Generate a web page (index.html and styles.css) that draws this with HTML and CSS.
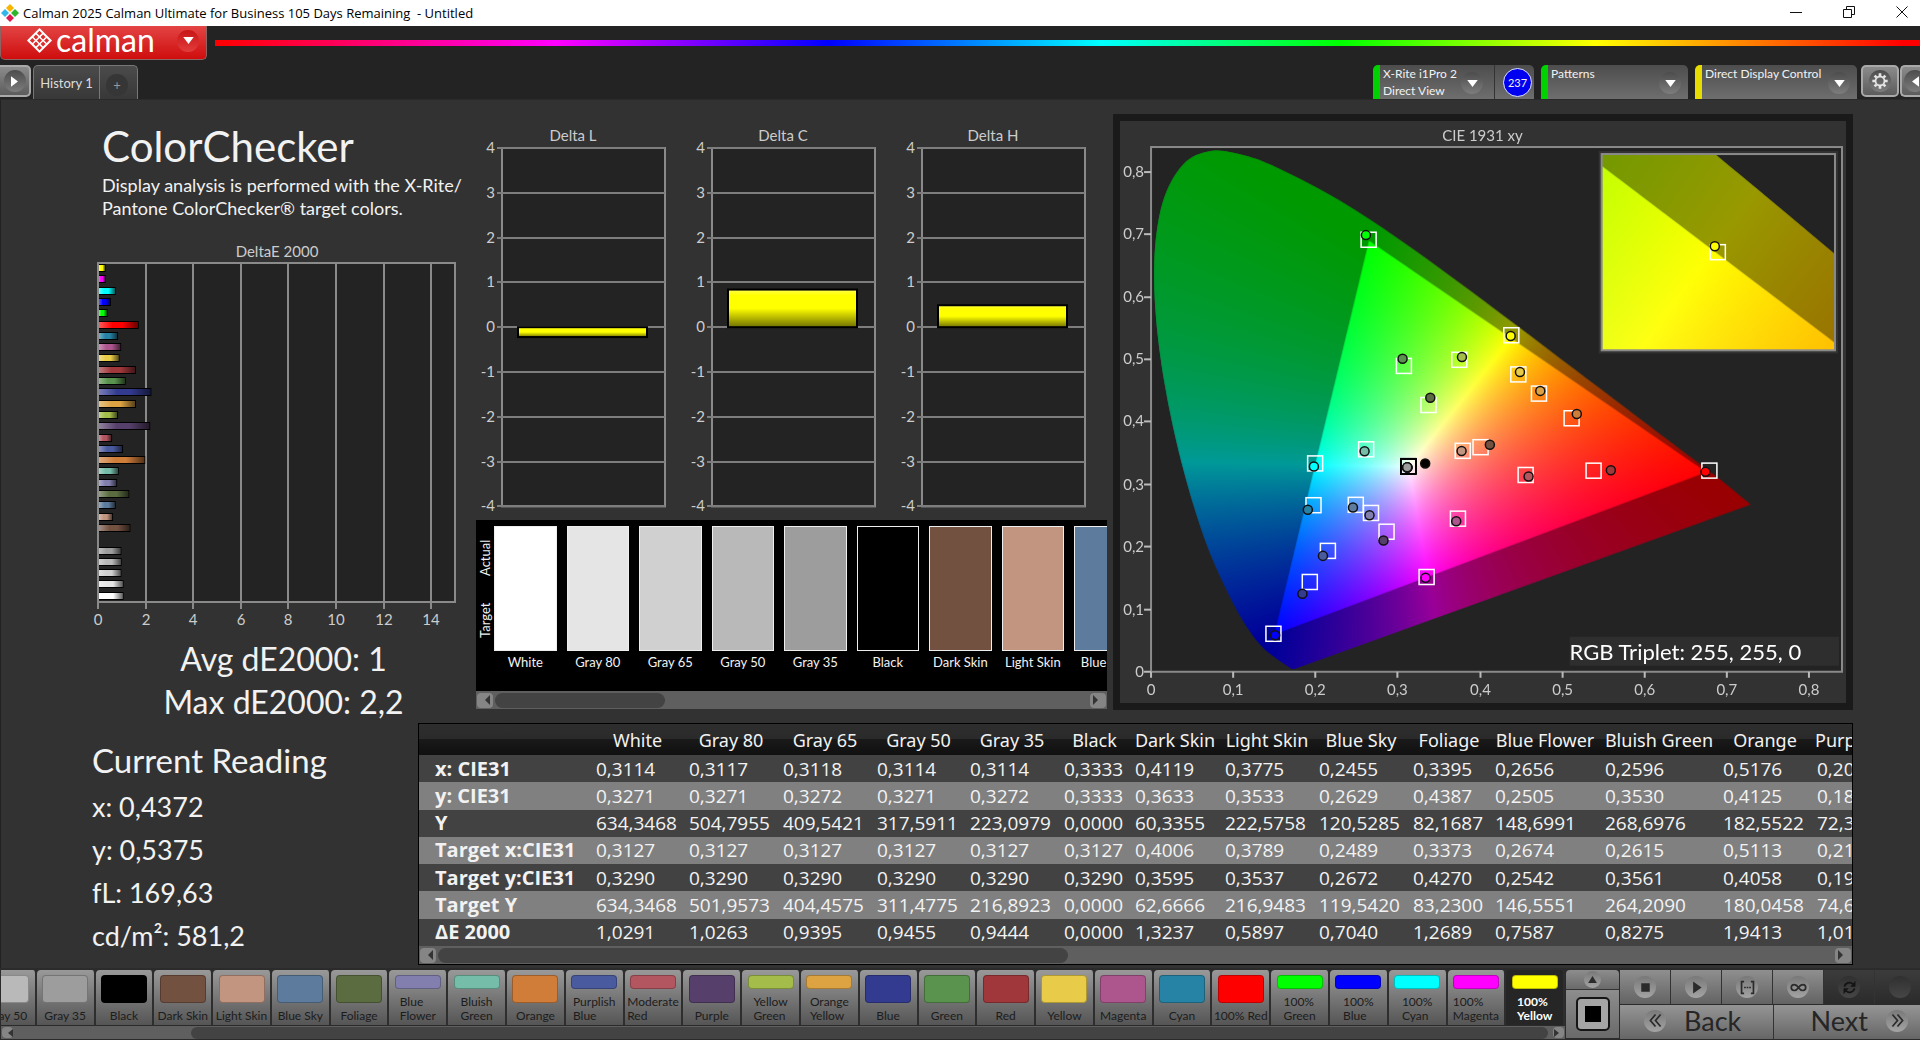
FILE: index.html
```html
<!DOCTYPE html>
<html lang="en">
<head>
  <meta charset="UTF-8" />
  <meta name="viewport" content="width=device-width, initial-scale=1.0"/>
  <title>Calman 2025</title>
  <link rel="stylesheet" href="styles.css">
</head>
<body>
<div class="titlebar">
  <svg class="app-icon" viewBox="0 0 18 18">
    <path d="M9 0l4 4-4 4-4-4z" fill="#f7b500"/>
    <path d="M4 5l4 4-4 4-4-4z" fill="#35b5ea"/>
    <path d="M14 5l4 4-4 4-4-4z" fill="#2fb52c"/>
    <path d="M9 10l4 4-4 4-4-4z" fill="#e0194f"/>
  </svg>
  <span class="titlebar-text">Calman 2025 Calman Ultimate for Business 105 Days Remaining&nbsp; - Untitled</span>
  <div class="window-buttons">
    <button aria-label="Minimize"><svg viewBox="0 0 12 12"><path d="M0 6.5h12"/></svg></button>
    <button aria-label="Restore"><svg viewBox="0 0 12 12"><path d="M.5 3.5h8v8h-8zM3.5 3V.5h8v8H9"/></svg></button>
    <button aria-label="Close"><svg viewBox="0 0 12 12"><path d="M.5 .5l11 11M11.5 .5l-11 11"/></svg></button>
  </div>
</div>

<header class="brandbar">
  <button class="brand">
    <svg class="brand-mark" viewBox="0 0 28 28">
      <path d="M14 1l13 13-13 13L1 14z" fill="#fff"/>
      <g fill="#dc2c2c">
        <path d="M14 4l2.600 2.600L14 9.200l-2.600-2.600z"/>
        <path d="M10.300 7.700l2.600 2.600-2.600 2.600-2.600-2.600z"/>
        <path d="M17.700 7.700l2.600 2.600-2.600 2.600-2.600-2.600z"/>
        <path d="M6.600 11.400L9.200 14l-2.600 2.600L4 14z"/>
        <path d="M14 11.400l2.600 2.600-2.600 2.600-2.600-2.600z"/>
        <path d="M21.400 11.400L24 14l-2.600 2.600-2.600-2.600z"/>
        <path d="M10.300 15.100l2.600 2.600-2.600 2.600-2.600-2.600z"/>
        <path d="M17.700 15.100l2.600 2.600-2.600 2.600-2.600-2.600z"/>
        <path d="M14 18.800l2.600 2.600L14 24l-2.600-2.600z"/>
      </g>
    </svg>
    <span class="brand-name">calman</span>
    <span class="knob knob-red"><svg viewBox="0 0 12 8"><path d="M0 0h12L6 8z"/></svg></span>
  </button>
  <div class="rainbow"></div>
</header>

<nav class="tabbar">
  <button class="square-btn side-left" aria-label="Expand"><span class="knob"><svg viewBox="0 0 8 12"><path d="M0 0v12l8-6z"/></svg></span></button>
  <div class="history">
    <button class="history-tab">History 1</button>
    <button class="history-add" aria-label="Add tab"><span class="knob">+</span></button>
  </div>
  <div class="instruments">
    <div class="instrument green meter">
      <button class="instrument-main"><span>X-Rite i1Pro 2<br>Direct View</span><span class="knob"><svg viewBox="0 0 12 8"><path d="M0 0h12L6 8z"/></svg></span></button>
      <span class="counter">237</span>
    </div>
    <div class="instrument green source">
      <button class="instrument-main"><span>Patterns</span><span class="knob"><svg viewBox="0 0 12 8"><path d="M0 0h12L6 8z"/></svg></span></button>
    </div>
    <div class="instrument yellow display">
      <button class="instrument-main"><span>Direct Display Control</span><span class="knob"><svg viewBox="0 0 12 8"><path d="M0 0h12L6 8z"/></svg></span></button>
    </div>
    <button class="square-btn gear" aria-label="Settings"><span class="knob"><svg viewBox="0 0 20 20">
      <circle cx="10" cy="10" r="5" fill="none" stroke="#e4e4e4" stroke-width="2"/>
      <path fill="none" stroke="#e4e4e4" stroke-width="3" d="M10 1.500v3M10 15.500v3M1.500 10h3M15.500 10h3M4 4l2 2M14 14l2 2M16 4l-2 2M6 14l-2 2"/>
    </svg></span></button>
    <button class="square-btn side-right" aria-label="Collapse"><span class="knob"><svg viewBox="0 0 8 12"><path d="M8 0v12L0 6z"/></svg></span></button>
  </div>
</nav>

<main>
  <div class="top-row">
    <section class="summary">
      <h1>ColorChecker</h1>
      <p class="intro">Display analysis is performed with the X-Rite/<br>Pantone ColorChecker® target colors.</p>
      <svg id="deltaE" class="chart" viewBox="0 0 475 395"></svg>
      <div class="stats">
        <p>Avg dE2000: 1</p>
        <p>Max dE2000: 2,2</p>
      </div>
    </section>

    <section class="middle">
      <svg id="deltaLCH" class="chart" viewBox="0 0 631 397"></svg>
      <div class="swatches">
        <div class="swatch-view">
          <div class="swatch-side"><span>Target</span><span>Actual</span></div>
          <div id="swatchList" class="swatch-list"></div>
        </div>
        <div class="scrollbar"><button class="left" aria-label="Scroll left"></button><span class="thumb"></span><button class="right" aria-label="Scroll right"></button></div>
      </div>
    </section>

    <section class="cie">
      <canvas id="cieColors" width="725" height="581"></canvas>
      <svg id="ciePlot" viewBox="0 0 725 581"></svg>
    </section>
  </div>

  <div class="bottom-row">
    <section class="reading">
      <h2>Current Reading</h2>
      <p>x: 0,4372</p>
      <p>y: 0,5375</p>
      <p>fL: 169,63</p>
      <p>cd/m²: 581,2</p>
    </section>
    <section class="results">
      <div class="table-view">
        <table id="results"></table>
      </div>
      <div class="scrollbar wide"><button class="left" aria-label="Scroll left"></button><span class="thumb"></span><button class="right" aria-label="Scroll right"></button></div>
    </section>
  </div>
</main>

<footer>
  <div class="strip">
    <div class="strip-view"><div id="patches" class="patches"></div></div>
    <div class="scrollbar strip-scroll"><button class="left" aria-label="Scroll left"></button><span class="thumb"></span><button class="right" aria-label="Scroll right"></button></div>
  </div>
  <div class="level">
    <button class="level-up" aria-label="Up"><span class="knob"><svg viewBox="0 0 10 8"><path d="M5 0l5 8H0z"/></svg></span></button>
    <button class="level-stop" aria-label="Pattern window"><span></span></button>
  </div>
  <div class="controls">
    <div class="transport">
      <button aria-label="Stop"><span class="knob"><svg viewBox="0 0 20 20"><path d="M5 5h10v10H5z"/></svg></span></button>
      <button aria-label="Play"><span class="knob"><svg viewBox="0 0 20 20"><path d="M6 3l10 7-10 7z"/></svg></span></button>
      <button aria-label="Read series"><span class="knob"><svg viewBox="0 0 20 20"><path class="line" d="M6 3H3v14h3M14 3h3v14h-3"/><path d="M6 9h2v2H6zM9 9h2v2H9zM12 9h2v2h-2z"/></svg></span></button>
      <button aria-label="Continuous"><span class="knob"><svg viewBox="0 0 20 20"><path class="line" d="M10 10C8 7 6.500 6.500 5 6.500a3.500 3.500 0 0 0 0 7c1.500 0 3-.5 5-3.500s3.500-3.500 5-3.500a3.500 3.500 0 0 1 0 7c-1.500 0-3-.5-5-3.500z"/></svg></span></button>
      <button class="off" aria-label="Refresh"><span class="knob"><svg viewBox="0 0 20 20"><path class="line" d="M4 9a6 6 0 0 1 10-3M16 11a6 6 0 0 1-10 3"/><path d="M17 2v7h-6zM3 18v-7h6z"/></svg></span></button>
      <button class="off" aria-label="Empty"><span class="knob"></span></button>
    </div>
    <div class="steps">
      <button class="back"><span class="knob"><svg viewBox="0 0 20 20"><path class="line" d="M10 3l-6 7 6 7M16 3l-6 7 6 7"/></svg></span>Back</button>
      <button class="next">Next<span class="knob"><svg viewBox="0 0 20 20"><path class="line" d="M4 3l6 7-6 7M10 3l6 7-6 7"/></svg></span></button>
    </div>
  </div>
</footer>

<script src="script.js"></script>
</body>
</html>
```

FILE: styles.css
```css
* {
  margin: 0;
  padding: 0;
  box-sizing: border-box;
}

body {
  height: 100vh;
  display: flex;
  flex-direction: column;
  overflow: hidden;
  background: #323232;
  color: #f2f2f2;
  font-family: Lato, "Liberation Sans", sans-serif;
}

button {
  border: none;
  background: none;
  color: inherit;
  font-family: inherit;
  cursor: pointer;
}

h1, h2 {
  font-weight: normal;
}

/* window title */
.titlebar {
  display: flex;
  align-items: center;
  height: 26px;
  flex: none;
  padding-left: 1px;
  background: #fff;
  color: #000;
  font-family: "Open Sans", sans-serif;
  font-size: 13px;
}

.app-icon {
  width: 18px;
  height: 18px;
  margin-right: 4px;
}

.window-buttons {
  display: flex;
  margin-left: auto;
}

.window-buttons button {
  width: 53px;
  height: 26px;
}

.window-buttons button:last-child {
  width: 45px;
  padding-left: 8px;
}

.window-buttons svg {
  width: 12px;
  height: 12px;
  fill: none;
  stroke: #111;
}

/* logo and rainbow line */
.brandbar {
  display: flex;
  flex: none;
  height: 39px;
  background: #232323;
}

.brand {
  display: flex;
  align-items: center;
  width: 207px;
  height: 34px;
  padding: 0 7px 4px 25px;
  border: 1px solid #8d6464;
  border-top: none;
  border-radius: 0 0 5px 5px;
  background: linear-gradient(#e34444, #cf0d0d);
  color: #fff;
}

.brand-mark {
  width: 27px;
  height: 27px;
}

.brand-name {
  flex: 1;
  margin-left: 3px;
  padding-bottom: 2px;
  font-size: 32px;
  line-height: 28px;
  text-align: left;
}

.knob {
  display: flex;
  align-items: center;
  justify-content: center;
  width: 22px;
  height: 22px;
  flex: none;
  border-radius: 50%;
  background: linear-gradient(#4c4c4c, #7d7d7d);
}

.knob svg {
  width: 11px;
  height: 7px;
  fill: #fff;
}

.knob-red {
  background: linear-gradient(#c81414, #e23c3c);
}

.rainbow {
  flex: 1;
  height: 6px;
  margin: 14px 0 0 8px;
  background: linear-gradient(90deg, #f00, #f0f 20%, #00f 36%, #0ff 52%, #0f0 66%, #ff0 81%, #f00 99%);
}

/* tabs under the logo */
.tabbar {
  display: flex;
  flex: none;
  height: 34px;
  background: #232323;
}

.square-btn {
  display: flex;
  align-items: center;
  justify-content: center;
  width: 38px;
  height: 32px;
  border: 2px solid #a9a9a9;
  border-radius: 5px;
  background: linear-gradient(#8b8b8b, #5c5c5c);
}

.square-btn .knob svg {
  width: 7px;
  height: 11px;
}

.side-left {
  width: 31px;
  border-left: none;
  border-radius: 0 5px 5px 0;
}

.history {
  display: flex;
  margin-left: 2px;
  border: 1px solid #777;
  border-bottom: none;
  border-radius: 5px 5px 0 0;
  background: linear-gradient(#4b4b4b, #383838);
}

.history-tab {
  width: 66px;
  border-right: 1px solid #777;
  color: #ddd;
  font-size: 13px;
}

.history-add {
  width: 37px;
  padding: 4px 6px 0;
  color: #999;
  font-size: 13px;
}

.history-add .knob {
  background: #363636;
}

.instruments {
  display: flex;
  margin-left: auto;
}

.instrument {
  display: flex;
  margin-right: 7px;
  border-left: 7px solid #00d200;
  border-radius: 5px 5px 0 0;
  background: linear-gradient(#4d4d4d, #6e6e6e);
}

.instrument.yellow {
  border-color: #e6dc00;
  margin-right: 4px;
}

.meter {
  width: 161px;
}

.source {
  width: 147px;
}

.display {
  width: 162px;
}

.instrument-main {
  display: flex;
  flex: 1;
  justify-content: space-between;
  align-items: flex-start;
  padding: 0 7px 0 3px;
  font-size: 12px;
  line-height: 17px;
  text-align: left;
  white-space: nowrap;
}

.instrument-main .knob {
  margin-top: 7px;
  margin-left: -8px;
}

.meter .instrument-main {
  padding-right: 11px;
  border-right: 1px solid #333;
}

.counter {
  width: 29px;
  height: 29px;
  margin: 3px 2px 0 8px;
  border: 1px solid #dfe3ff;
  border-radius: 50%;
  background: #0000f0;
  font-size: 11px;
  line-height: 27px;
  text-align: center;
}

.gear .knob svg {
  width: 18px;
  height: 18px;
}

.side-right {
  width: 20px;
  margin-left: 1px;
  border-right: none;
  border-radius: 5px 0 0 5px;
  justify-content: flex-start;
  padding-left: 2px;
  overflow: hidden;
}

/* work area */
main {
  flex: 1;
  display: flex;
  flex-direction: column;
  padding-right: 67px;
  border-left: 1px solid #222;
  border-top: 1px solid #2a2a2a;
}

.top-row {
  display: grid;
  grid-template-columns: minmax(0, 475fr) minmax(0, 631fr) minmax(0, 746fr);
  align-items: start;
}

.chart {
  display: block;
  width: 100%;
}

.chart text, .cie text {
  fill: #ccc;
  font-size: 15px;
}

.summary {
  padding-top: 21px;
}

.summary h1 {
  padding-left: 101px;
  font-size: 42px;
  line-height: 50px;
}

.intro {
  margin: 3px 0 19px;
  padding-left: 101px;
  font-size: 18px;
  line-height: 23px;
  white-space: nowrap;
}

.stats {
  padding: 3px 0 0 90px;
  font-size: 32px;
  line-height: 43px;
  text-align: center;
}

.middle {
  padding-top: 23px;
}

.swatches {
  background: #000;
}

.swatch-view {
  display: flex;
  height: 171px;
  padding-top: 6px;
  overflow: hidden;
}

.swatch-side {
  display: flex;
  justify-content: space-around;
  width: 18px;
  height: 125px;
  writing-mode: vertical-rl;
  transform: rotate(180deg);
  font-size: 13px;
  line-height: 18px;
}

.swatch-list {
  flex: 1;
  display: grid;
  grid-auto-flow: column;
  grid-auto-columns: 10.2%;
  column-gap: 10px;
}

.swatch {
  font-size: 13px;
  line-height: 23px;
  text-align: center;
  white-space: nowrap;
}

.swatch-color {
  height: 125px;
  border: 1px solid #eee;
}

/* scrollbars */
.scrollbar {
  display: flex;
  align-items: center;
  height: 18px;
  padding: 0 1px;
  background: #5f5f5f;
}

.scrollbar button {
  width: 16px;
  height: 15px;
  border-radius: 4px;
  background: #858585;
}

.scrollbar button::before {
  content: "";
  display: block;
  width: 5px;
  margin: auto;
  border: 5px solid transparent;
  border-right-color: #333;
  border-left-width: 0;
}

.scrollbar .right {
  margin-left: auto;
}

.scrollbar .right::before {
  border-left: 5px solid #333;
  border-right-width: 0;
}

.thumb {
  width: 27%;
  height: 15px;
  margin-left: 2px;
  border-radius: 8px;
  background: #434343;
}

.wide .thumb {
  width: 44%;
}

/* CIE chart, colours below and markers on top */
.cie {
  display: grid;
  margin: 14px 0 0 6px;
  border: 7px solid #1a1a1a;
  background: #323232;
}

.cie canvas, .cie svg {
  grid-area: 1 / 1;
  width: 100%;
  display: block;
}

.cie .triplet {
  fill: #fff;
  font-size: 22px;
}

.bottom-row {
  display: flex;
}

.reading {
  width: 417px;
  flex: none;
  padding: 14px 0 0 91px;
}

.reading h2 {
  margin-bottom: 2px;
  font-size: 33px;
  line-height: 46px;
}

.reading p {
  font-size: 27px;
  line-height: 43px;
}

.results {
  flex: 1;
  min-width: 0;
  border: 1px solid #000;
}

.table-view {
  overflow: hidden;
}

table {
  width: 1920px;
  height: 222px;
  table-layout: fixed;
  border-collapse: collapse;
  font-family: "Open Sans", sans-serif;
  font-size: 19px;
  line-height: 24px;
}

.col-label {
  width: 172px;
}

.col-s {
  width: 71px;
}

.col-w {
  width: 93px;
}

.col-m {
  width: 94px;
}

.col-f {
  width: 82px;
}

.col-d {
  width: 90px;
}

.col-l {
  width: 110px;
}

.col-xl {
  width: 118px;
}

thead {
  background: linear-gradient(#2e2e2e, #2a2a2a 49%, #191919 50%, #101010);
}

thead th {
  height: 31px;
  font-size: 18px;
  font-weight: normal;
  font-family: "Noto Sans", sans-serif;
  white-space: nowrap;
}

tbody tr {
  background: #424242;
}

tbody tr:nth-child(even) {
  background: #808080;
}

tbody th {
  padding-left: 16px;
  font-size: 20px;
  text-align: left;
}

tbody td {
  padding-left: 5px;
}

/* bottom strip */
footer {
  display: flex;
  flex: none;
  height: 72px;
  padding-top: 2px;
  background: #2b2b2b;
}

.strip {
  flex: 1;
  min-width: 0;
  padding-left: 1px;
}

.strip-view {
  height: 56px;
  overflow: hidden;
}

.patches {
  display: flex;
  height: 55px;
  margin-left: -23px;
}

.patch {
  flex: 1 1 0;
  min-width: 0;
  display: flex;
  flex-direction: column;
  align-items: center;
  padding: 5px 0 2px;
  border-right: 2px solid #2e2e2e;
  border-radius: 4px 4px 0 0;
  background: linear-gradient(#999, #555);
  color: #1c1c1c;
  font-size: 12px;
  line-height: 14px;
  white-space: nowrap;
}

.patch-color {
  flex: 1;
  width: 46px;
  margin-bottom: 6px;
  border: 1px solid rgba(0, 0, 0, 0.25);
  border-radius: 4px;
}

.patch span:last-child {
  text-align: left;
}

.patch.selected {
  background: #262626;
  color: #fff;
  font-weight: bold;
}

.strip-scroll {
  height: 13px;
}

.strip-scroll button {
  width: 11px;
  height: 11px;
}

.strip-scroll button::before {
  border-top-width: 4px;
  border-bottom-width: 4px;
}

.strip-scroll .thumb {
  flex: 1;
  height: 12px;
  margin-left: 178px;
  margin-right: 5px;
}

.level {
  display: flex;
  flex-direction: column;
  width: 55px;
  padding: 0 1px;
}

.level-up, .level-stop {
  display: flex;
  align-items: center;
  justify-content: center;
  background: linear-gradient(#8d8d8d, #6a6a6a);
}

.level-up {
  height: 20px;
  border-radius: 4px 4px 0 0;
  border-bottom: 1px solid #333;
}

.level-up .knob, .transport .knob, .steps .knob {
  background: linear-gradient(#787878, #a4a4a4);
}

.level-up .knob {
  width: 17px;
  height: 17px;
}

.level-up .knob svg, .transport svg, .steps svg {
  fill: #2b2b2b;
}

.level-stop {
  flex: 1;
  margin-bottom: 2px;
}

.level-stop span {
  width: 34px;
  height: 34px;
  border: 2px solid #151515;
  border-radius: 5px;
  background: linear-gradient(#000, #000) center / 16px 16px no-repeat, #a5a5a5;
}

.controls {
  width: 300px;
  overflow: hidden;
}

.transport {
  display: flex;
  height: 34px;
}

.transport button {
  display: flex;
  align-items: center;
  justify-content: center;
  flex: 0 0 51px;
  border-right: 1px solid #333;
  background: linear-gradient(#8f8f8f, #636363);
}

.transport .off {
  background: linear-gradient(#3c3c3c, #2b2b2b);
}

.transport .off .knob {
  background: linear-gradient(#303030, #464646);
}

.transport .knob svg, .steps .knob svg {
  width: 17px;
  height: 17px;
}

.knob .line {
  fill: none;
  stroke: #2b2b2b;
  stroke-width: 2;
}

.transport .off svg {
  fill: #141414;
}

.transport .off .line {
  stroke: #141414;
}

.steps {
  display: flex;
  height: 35px;
  padding-top: 1px;
}

.steps button {
  display: flex;
  align-items: center;
  padding-bottom: 3px;
  background: linear-gradient(#959595, #666);
  color: #262626;
  font-size: 27px;
}

.steps .back {
  flex: 0 0 154px;
  gap: 18px;
  padding-left: 24px;
  border-right: 1px solid #333;
}

.steps .next {
  flex: 1;
  gap: 18px;
  justify-content: flex-end;
  padding-right: 12px;
}
```

FILE: script.js
```js
// patches in measuring order: name, colour, deltaE, target x/y, actual x/y
const samples = [
  { name: "White", color: "#ffffff", de: 1.03, t: [0.3127, 0.3290], a: [0.3114, 0.3271] },
  { name: "Gray 80", color: "#e5e5e5", de: 1.03, t: [0.3127, 0.3290], a: [0.3117, 0.3271] },
  { name: "Gray 65", color: "#d0d0d0", de: 0.94, t: [0.3127, 0.3290], a: [0.3118, 0.3272] },
  { name: "Gray 50", color: "#b9b9b9", de: 0.95, t: [0.3127, 0.3290], a: [0.3114, 0.3271] },
  { name: "Gray 35", color: "#9d9d9d", de: 0.94, t: [0.3127, 0.3290], a: [0.3114, 0.3272] },
  { name: "Black", color: "#000000", de: 0, t: [0.3127, 0.3290], a: [0.3333, 0.3333] },
  { name: "Dark Skin", color: "#735141", de: 1.32, t: [0.4006, 0.3595], a: [0.4119, 0.3633] },
  { name: "Light Skin", color: "#c29580", de: 0.59, t: [0.3789, 0.3537], a: [0.3775, 0.3533] },
  { name: "Blue Sky", color: "#5d7b9d", de: 0.70, t: [0.2489, 0.2672], a: [0.2455, 0.2629] },
  { name: "Foliage", color: "#5b6c41", de: 1.27, t: [0.3373, 0.4270], a: [0.3395, 0.4387] },
  { name: "Blue Flower", color: "#827fae", de: 0.76, t: [0.2674, 0.2542], a: [0.2656, 0.2505], two: true },
  { name: "Bluish Green", color: "#76bda9", de: 0.83, t: [0.2615, 0.3561], a: [0.2596, 0.3530], two: true },
  { name: "Orange", color: "#d07d3a", de: 1.94, t: [0.5113, 0.4058], a: [0.5176, 0.4125] },
  { name: "Purplish Blue", color: "#4a5a9f", de: 1.01, t: [0.2150, 0.1935], a: [0.2090, 0.1855], two: true },
  { name: "Moderate Red", color: "#b45660", de: 0.55, t: [0.4554, 0.3150], a: [0.4590, 0.3126], two: true },
  { name: "Purple", color: "#573f6b", de: 2.15, t: [0.2863, 0.2242], a: [0.2826, 0.2100] },
  { name: "Yellow Green", color: "#a3bc4a", de: 0.80, t: [0.3747, 0.4994], a: [0.3780, 0.5037], two: true },
  { name: "Orange Yellow", color: "#dda343", de: 1.55, t: [0.4716, 0.4453], a: [0.4732, 0.4496], two: true },
  { name: "Blue", color: "#333b90", de: 2.20, t: [0.1930, 0.1437], a: [0.1840, 0.1247] },
  { name: "Green", color: "#5a934d", de: 1.12, t: [0.3074, 0.4896], a: [0.3058, 0.5012] },
  { name: "Red", color: "#a0373b", de: 1.55, t: [0.5380, 0.3219], a: [0.5590, 0.3225] },
  { name: "Yellow", color: "#e8cb48", de: 0.86, t: [0.4465, 0.4760], a: [0.4485, 0.4797] },
  { name: "Magenta", color: "#ad568e", de: 0.93, t: [0.3731, 0.2451], a: [0.3710, 0.2408] },
  { name: "Cyan", color: "#2783a5", de: 0.80, t: [0.1975, 0.2666], a: [0.1906, 0.2592] },
  { name: "100% Red", color: "#ff0000", de: 1.67, t: [0.6788, 0.3220], a: [0.6740, 0.3200] },
  { name: "100% Green", color: "#00ff00", de: 0.36, t: [0.2645, 0.6916], a: [0.2612, 0.6990], two: true },
  { name: "100% Blue", color: "#0000ff", de: 0.50, t: [0.1488, 0.0608], a: [0.1509, 0.0584], two: true },
  { name: "100% Cyan", color: "#00ffff", de: 0.70, t: [0.1995, 0.3335], a: [0.1980, 0.3286], two: true },
  { name: "100% Magenta", color: "#ff00ff", de: 0.28, t: [0.3350, 0.1517], a: [0.3337, 0.1505], two: true },
  { name: "100% Yellow", color: "#ffff00", de: 0.28, t: [0.4380, 0.5387], a: [0.4372, 0.5375], two: true },
];

const byId = (id) => document.getElementById(id);
const line = (x1, y1, x2, y2, color) =>
  `<path d="M${x1} ${y1}L${x2} ${y2}" stroke="${color || "#7d7d7d"}" stroke-width="2"/>`;
const label = (x, y, text, anchor) =>
  `<text x="${x}" y="${y}" text-anchor="${anchor || "middle"}">${text}</text>`;

// DeltaE 2000 bars, last patch on top
function drawDeltaE() {
  const left = 97, top = 24, width = 357, height = 339;
  let out = `<defs><linearGradient id="shade"><stop offset="0" stop-color="#fff" stop-opacity=".35"/>
    <stop offset=".35" stop-color="#fff" stop-opacity="0"/><stop offset=".6" stop-opacity="0"/>
    <stop offset="1" stop-opacity=".6"/></linearGradient></defs>`;
  out += label(276, 18, "DeltaE 2000");
  out += `<rect x="${left}" y="${top}" width="${width}" height="${height}" fill="#232323" stroke="#8a8a8a" stroke-width="2"/>`;
  for (let v = 0; v <= 14; v += 2) {
    const x = Math.round(left + v * width / 15);
    out += line(x, top, x, top + height + 7, "#8a8a8a") + label(x, 386, v);
  }
  samples.slice().reverse().forEach((s, i) => {
    if (!s.de) return;
    const y = Math.round(top + 1 + i * 11.3), w = s.de * width / 15;
    out += `<rect x="${left + 1}" y="${y}" width="${w}" height="8"/>
      <rect x="${left + 1}" y="${y + 1}" width="${w - 1}" height="6" fill="${s.color}"/>
      <rect x="${left + 1}" y="${y + 1}" width="${w - 1}" height="6" fill="url(#shade)"/>`;
  });
  byId("deltaE").innerHTML = out;
}

function drawDeltaLCH() {
  const top = 25, step = 44.8;
  let out = `<defs><linearGradient id="bar" x2="0" y2="1"><stop offset="0" stop-color="#ffff50"/>
    <stop offset=".15" stop-color="#ff0"/><stop offset=".5" stop-color="#ff0"/>
    <stop offset="1" stop-color="#707000"/></linearGradient></defs>`;
  [["Delta L", -0.22], ["Delta C", 0.84], ["Delta H", 0.49]].forEach(([name, value], i) => {
    const left = 26 + i * 210, zero = top + 4 * step;
    out += label(left + 71, 18, name);
    out += `<rect x="${left}" y="${top}" width="163" height="${step * 8}" fill="#232323" stroke="#8a8a8a" stroke-width="2"/>`;
    for (let v = 4; v >= -4; v--) {
      const y = Math.round(top + (4 - v) * step);
      out += line(left - 5, y, left + 163, y) + label(left - 7, y + 5, v, "end");
    }
    const h = Math.abs(value) * step;
    out += `<rect x="${left + 16}" y="${value > 0 ? zero - h : zero}" width="129" height="${h}" fill="url(#bar)" stroke="#000" stroke-width="2"/>`;
  });
  byId("deltaLCH").innerHTML = out;
}

// spectral locus, 380 to 700 nm
const locus = [
  [.1741, .0050], [.1714, .0051], [.1689, .0069], [.1644, .0109], [.1566, .0177], [.1440, .0297],
  [.1355, .0399], [.1241, .0578], [.1096, .0868], [.0913, .1327], [.0687, .2007], [.0454, .2950],
  [.0235, .4127], [.0082, .5384], [.0039, .6548], [.0139, .7502], [.0389, .8120], [.0743, .8338],
  [.1142, .8262], [.1547, .8059], [.2296, .7543], [.3016, .6923], [.3731, .6245], [.4441, .5547],
  [.5125, .4866], [.5752, .4242], [.6270, .3725], [.6658, .3340], [.6915, .3083], [.7290, .2680],
];
const gamut = [[.675, .32], [.265, .69], [.15, .06]];

const plot = { x: 31, y: 26, w: 690, h: 524, x0: 0, y0: 0, range: 0.84 };
const inset = { x: 481, y: 33, w: 233, h: 196, x0: 0.4115, y0: 0.507, range: 0.054 };

const toX = (box, v) => box.x + (v - box.x0) / box.range * box.w;
const toY = (box, v) => box.y + box.h - (v - box.y0) / box.range * box.h;

function colorLayer(box) {
  const layer = document.createElement("canvas");
  layer.width = box.w;
  layer.height = box.h;
  const ctx = layer.getContext("2d");
  const img = ctx.createImageData(box.w, box.h);
  for (let j = 0; j < box.h; j++) {
    for (let i = 0; i < box.w; i++) {
      const x = box.x0 + i / box.w * box.range;
      const y = box.y0 + (box.h - j) / box.h * box.range;
      const z = 1 - x - y;
      const r = Math.max(0, 2.4935 * x - 0.9314 * y - 0.4027 * z);
      const g = Math.max(0, -0.8295 * x + 1.7627 * y + 0.0236 * z);
      const b = Math.max(0, 0.0358 * x - 0.0762 * y + 0.9569 * z);
      const k = 255 / Math.max(r, g, b);
      img.data.set([r * k, g * k, b * k, 255], (j * box.w + i) * 4);
    }
  }
  ctx.putImageData(img, 0, 0);
  return layer;
}

function tracePath(ctx, box, points, smooth) {
  const p = points.map(([x, y]) => [toX(box, x), toY(box, y)]);
  ctx.beginPath();
  ctx.moveTo(p[0][0], p[0][1]);
  for (let i = 1; i < p.length; i++) {
    if (!smooth) {
      ctx.lineTo(p[i][0], p[i][1]);
      continue;
    }
    const a = p[Math.max(0, i - 2)], b = p[i - 1], c = p[i], d = p[Math.min(p.length - 1, i + 1)];
    ctx.bezierCurveTo(b[0] + (c[0] - a[0]) / 6, b[1] + (c[1] - a[1]) / 6,
      c[0] - (d[0] - b[0]) / 6, c[1] - (d[1] - b[1]) / 6, c[0], c[1]);
  }
  ctx.closePath();
}

function paintColors(ctx, box) {
  const layer = colorLayer(box);
  ctx.save();
  ctx.beginPath();
  ctx.rect(box.x, box.y, box.w, box.h);
  ctx.clip();
  ctx.fillStyle = "#232323";
  ctx.fillRect(box.x, box.y, box.w, box.h);
  tracePath(ctx, box, locus, true);
  ctx.clip();
  ctx.drawImage(layer, box.x, box.y);
  ctx.fillStyle = "rgba(0, 0, 0, 0.4)";
  ctx.fillRect(box.x, box.y, box.w, box.h);
  tracePath(ctx, box, gamut, false);
  ctx.clip();
  ctx.drawImage(layer, box.x, box.y);
  ctx.restore();
}

function drawCie() {
  const ctx = byId("cieColors").getContext("2d");
  paintColors(ctx, plot);
  ctx.fillStyle = "#323232";
  ctx.fillRect(inset.x - 3, inset.y - 3, inset.w + 6, inset.h + 6);
  paintColors(ctx, inset);

  const square = (x, y, color) => `<rect x="${x - 7.5}" y="${y - 7.5}" width="15" height="15" fill="none" stroke="${color}" stroke-width="1.5"/>`;
  const dot = (x, y, color) => `<circle cx="${x}" cy="${y}" r="4.5" fill="${color}" stroke="#111" stroke-width="1.5"/>`;
  const bottom = plot.y + plot.h;
  let out = label(362, 20, "CIE 1931 xy");
  out += `<rect x="${plot.x}" y="${plot.y}" width="${plot.w}" height="${plot.h}" fill="none" stroke="#8a8a8a" stroke-width="2"/>`;
  for (let i = 0; i <= 8; i++) {
    const text = i ? "0," + i : "0";
    const x = Math.round(toX(plot, i / 10)), y = Math.round(toY(plot, i / 10));
    out += line(x, bottom, x, bottom + 6, "#bbb") + label(x, bottom + 23, text);
    out += line(plot.x - 7, y, plot.x, y, "#bbb") + label(plot.x - 7, y + 5, text, "end");
  }
  samples.forEach((s) => {
    const gray = s.t[0] === 0.3127;
    out += square(toX(plot, s.t[0]), toY(plot, s.t[1]), gray ? "#000" : "#fff");
  });
  samples.forEach((s) => {
    out += dot(toX(plot, s.a[0]), toY(plot, s.a[1]), s.color);
  });
  out += `<rect x="${inset.x}" y="${inset.y}" width="${inset.w}" height="${inset.h}" fill="none" stroke="#8a8a8a" stroke-width="2"/>`;
  out += square(597, 131, "#fff") + dot(594, 125, "#ff0");
  out += `<rect x="449" y="515" width="269" height="29" fill="#2e2e2e"/>`;
  out += `<text class="triplet" x="449" y="538">RGB Triplet: 255, 255, 0</text>`;
  byId("ciePlot").innerHTML = out;
}

function drawTable() {
  const cols = ["label", "w", "m", "m", "w", "m", "s", "d", "m", "m", "f", "l", "xl", "m", "xl"];
  const rows = {
    "x: CIE31": "0,3114 0,3117 0,3118 0,3114 0,3114 0,3333 0,4119 0,3775 0,2455 0,3395 0,2656 0,2596 0,5176 0,2090",
    "y: CIE31": "0,3271 0,3271 0,3272 0,3271 0,3272 0,3333 0,3633 0,3533 0,2629 0,4387 0,2505 0,3530 0,4125 0,1855",
    "Y": "634,3468 504,7955 409,5421 317,5911 223,0979 0,0000 60,3355 222,5758 120,5285 82,1687 148,6991 268,6976 182,5522 72,3",
    "Target x:CIE31": "0,3127 0,3127 0,3127 0,3127 0,3127 0,3127 0,4006 0,3789 0,2489 0,3373 0,2674 0,2615 0,5113 0,2150",
    "Target y:CIE31": "0,3290 0,3290 0,3290 0,3290 0,3290 0,3290 0,3595 0,3537 0,2672 0,4270 0,2542 0,3561 0,4058 0,1935",
    "Target Y": "634,3468 501,9573 404,4575 311,4775 216,8923 0,0000 62,6666 216,9483 119,5420 83,2300 146,5551 264,2090 180,0458 74,6",
    "ΔE 2000": "1,0291 1,0263 0,9395 0,9455 0,9444 0,0000 1,3237 0,5897 0,7040 1,2689 0,7587 0,8275 1,9413 1,01",
  };
  const names = samples.slice(0, 14).map((s) => `<th scope="col">${s.name}</th>`).join("");
  let out = `<colgroup>${cols.map((c) => `<col class="col-${c}">`).join("")}<col></colgroup>`;
  out += `<thead><tr><td></td>${names}<td></td></tr></thead><tbody>`;
  for (const name in rows) {
    out += `<tr><th scope="row">${name}</th>${rows[name].split(" ").map((v) => `<td>${v}</td>`).join("")}<td></td></tr>`;
  }
  byId("results").innerHTML = out + "</tbody>";
}

function drawSwatches() {
  byId("swatchList").innerHTML = samples.slice(0, 9).map((s) =>
    `<div class="swatch"><div class="swatch-color" style="background:${s.color}"></div>${s.name}</div>`).join("");
  byId("patches").innerHTML = samples.slice(3).map((s) => {
    const text = s.two ? s.name.replace(" ", "<br>") : s.name;
    const selected = s.name === "100% Yellow" ? " selected" : "";
    return `<button class="patch${selected}"><span class="patch-color" style="background:${s.color}"></span><span>${text}</span></button>`;
  }).join("");
}

drawDeltaE();
drawDeltaLCH();
drawCie();
drawTable();
drawSwatches();
```
